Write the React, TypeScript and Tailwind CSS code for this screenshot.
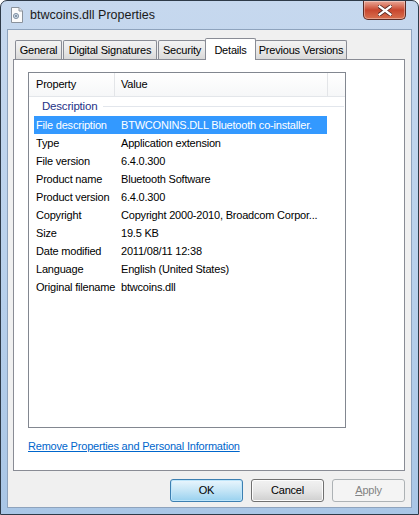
import React from "react";

const rows: [string, string][] = [
  ["File description", "BTWCONINS.DLL Bluetooth co-installer."],
  ["Type", "Application extension"],
  ["File version", "6.4.0.300"],
  ["Product name", "Bluetooth Software"],
  ["Product version", "6.4.0.300"],
  ["Copyright", "Copyright 2000-2010, Broadcom Corpor..."],
  ["Size", "19.5 KB"],
  ["Date modified", "2011/08/11 12:38"],
  ["Language", "English (United States)"],
  ["Original filename", "btwcoins.dll"],
];

const tabs: { label: string; w: string }[] = [
  { label: "General", w: "w-[47px]" },
  { label: "Digital Signatures", w: "w-[94px]" },
  { label: "Security", w: "w-[48px]" },
  { label: "Details", w: "w-[51px]" },
  { label: "Previous Versions", w: "w-[92px]" },
];

const FileIcon = () => (
  <svg width="14" height="16" viewBox="0 0 14 16">
    <path d="M1.5 0.5h7.5l3.5 3.5v11.5h-11z" fill="#fbfbfb" stroke="#8a929c" />
    <path d="M9 0.5v3.5h3.5" fill="#e4e8ec" stroke="#8a929c" />
    <circle cx="6" cy="9" r="2.6" fill="#c9d6e3" stroke="#6f8296" strokeWidth="0.8" />
    <circle cx="6" cy="9" r="1" fill="#6f8296" />
  </svg>
);

const CloseButton = () => (
  <div className="w-[43px] h-[19px] rounded-b-[5px] border border-t-0 border-[#5a2a24] bg-gradient-to-b from-[#e9a797] via-[#c8462e] to-[#d8704f] flex items-center justify-center shadow-[inset_0_0_0_1px_rgba(255,255,255,0.35)]">
    <svg width="14" height="11" viewBox="0 0 14 11">
      <path d="M1.5 1.5L12.5 9.5M12.5 1.5L1.5 9.5" stroke="#5b2b24" strokeWidth="4" strokeLinecap="square" />
      <path d="M1.5 1.5L12.5 9.5M12.5 1.5L1.5 9.5" stroke="#ffffff" strokeWidth="2.2" strokeLinecap="square" />
    </svg>
  </div>
);

export default function App() {
  return (
    <div
      className="w-[419px] h-[515px] rounded-t-[7px] border border-[#2e3a48] bg-gradient-to-b from-[#c6d8ee] via-[#b9d1ec] to-[#a9c6e6] flex flex-col text-[11px] tracking-[-0.2px] text-[#000] overflow-hidden"
      style={{ fontFamily: '"Liberation Sans", Arial, sans-serif' }}
    >
      {/* Title bar */}
      <div className="h-[28px] flex items-start shrink-0">
        <div className="flex items-center h-[28px] pl-[9px]">
          <FileIcon />
          <span className="ml-[6px] text-[12.5px] tracking-normal text-[#1a1a1a]">btwcoins.dll Properties</span>
        </div>
        <div className="ml-auto mr-[12px]">
          <CloseButton />
        </div>
      </div>

      {/* Client area */}
      <div className="mx-[6px] h-[479px] bg-[#f0f0f0] border border-[#8ea3bd] flex flex-col pl-[5px] pr-[6px]">
        {/* Tabs */}
        <div className="h-[29px] flex items-end pl-[2px] shrink-0">
          {tabs.map(({ label, w }) =>
            label === "Details" ? (
              <div
                key={label}
                className={
                  w +
                  " h-[22px] -ml-[2px] mr-[-1px] -mb-[1px] z-10 relative bg-white border border-b-0 border-[#898c95] rounded-t-[2px] flex justify-center items-start pt-[3px]"
                }
              >
                {label}
              </div>
            ) : (
              <div
                key={label}
                className={
                  w +
                  " h-[19px] mr-[1px] border border-b-0 border-[#898c95] rounded-t-[2px] bg-gradient-to-b from-[#f3f3f3] via-[#e9e9e9] to-[#d9d9d9] flex justify-center items-center"
                }
              >
                {label}
              </div>
            )
          )}
        </div>

        {/* Panel */}
        <div className="h-[412px] bg-white border border-[#898c95] flex flex-col shrink-0">
          <div className="mt-[12px] ml-[14px] w-[318px] h-[356px] border border-[#828790] flex flex-col">
            {/* Header */}
            <div className="h-[24px] flex bg-gradient-to-b from-[#ffffff] to-[#f6f7f8] border-b border-[#e3e6ea] shrink-0">
              <div className="w-[86px] border-r border-[#e3e5e8] flex items-center pl-[7px]">Property</div>
              <div className="w-[213px] border-r border-[#e3e5e8] flex items-center pl-[6px]">Value</div>
            </div>
            {/* Group */}
            <div className="h-[19px] flex items-center pl-[13px] pr-[1px]">
              <span className="text-[#1e3287] text-[11.5px]">Description</span>
              <div className="flex-1 ml-[6px] h-px bg-[#e2e6ec]" />
            </div>
            {/* Rows */}
            <div className="flex flex-col">
              {rows.map(([k, v], i) => (
                <div
                  key={k}
                  className={
                    "h-[18px] ml-[5px] w-[293px] flex items-center " +
                    (i === 0 ? "bg-[#3399ff] text-white" : "")
                  }
                >
                  <span className="w-[87px] shrink-0 pl-[2px] whitespace-nowrap">{k}</span>
                  <span className="whitespace-nowrap">{v}</span>
                </div>
              ))}
            </div>
          </div>
          <a href="#" className="mt-[10px] ml-[14px] text-[#0066cc] underline self-start">
            Remove Properties and Personal Information
          </a>
        </div>

        {/* Buttons */}
        <div className="mt-[8px] flex justify-end gap-[8px]">
          <button className="w-[73px] h-[23px] rounded-[3px] border border-[#3c7fb1] bg-gradient-to-b from-[#eaf6fd] via-[#c4e5f6] to-[#98d1ef] shadow-[inset_0_0_0_1px_#bfe6fb] text-[#000]">
            OK
          </button>
          <button className="w-[73px] h-[23px] rounded-[3px] border border-[#707070] bg-gradient-to-b from-[#f2f2f2] via-[#e6e6e6] to-[#cfcfcf] shadow-[inset_0_0_0_1px_#fcfcfc] text-[#000]">
            Cancel
          </button>
          <button className="w-[73px] h-[23px] rounded-[3px] border border-[#adb2b5] bg-[#f4f4f4] text-[#838383]">
            <span className="underline">A</span>pply
          </button>
        </div>
      </div>
    </div>
  );
}
